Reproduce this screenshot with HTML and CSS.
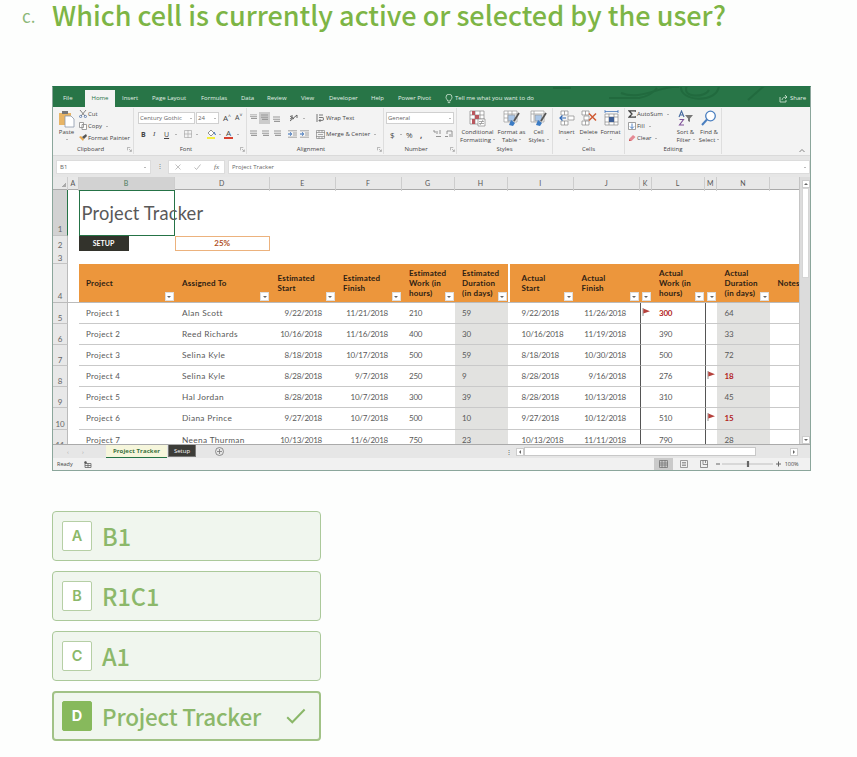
FILE: index.html
```html
<!DOCTYPE html>
<html lang="en">
<head>
<meta charset="utf-8">
<title>Quiz question</title>
<link rel="stylesheet" href="styles.css">
</head>
<body>
<svg class="defs" width="0" height="0">
  <symbol id="launch" viewBox="0 0 6 6"><path d="M.5 4V.5H4M2.5 2.5l2.5 2.5M5.3 3v2.3H3" fill="none" stroke="#888" stroke-width=".7"/></symbol>
  <symbol id="flag" viewBox="0 0 8 8"><path d="M1 0v8" stroke="#777" stroke-width=".8"/><path d="M1.3.5 8 3.3 1.3 5.5z" fill="#b5413c"/></symbol>
  <symbol id="lines" viewBox="0 0 9 8"><path d="M1 1h7M1 3.2h7M2 5.4h6" stroke="#999" stroke-width="1.1"/></symbol>
  <symbol id="indent" viewBox="0 0 9 8"><path d="M0 .8h9M5 3h4M5 5h4M0 7.2h9" stroke="#999" stroke-width=".9"/><path d="M0 4h3M2 2.4 3.8 4 2 5.6" fill="none" stroke="#2f68b5"/></symbol>
</svg>
<main class="page">
  <h1 class="question"><span class="num">c.</span><span class="qtext">Which cell is currently active or selected by the user?</span></h1>

  <section class="excel">
    <nav class="tabs">
      <span>File</span><span class="home">Home</span><span>Insert</span><span>Page Layout</span><span>Formulas</span><span>Data</span><span>Review</span><span>View</span><span>Developer</span><span>Help</span><span>Power Pivot</span>
      <svg width="8" height="10" viewBox="0 0 8 10" fill="none" stroke="#d5ead9" stroke-width=".8"><path d="M2.6 7C2.6 5.6 1 5 1 3.2a3 3 0 0 1 6 0C7 5 5.400 5.600 5.400 7zM2.800 8.600h2.400"/></svg>
      <span>Tell me what you want to do</span>
      <svg class="swirl" width="240" height="20" viewBox="0 0 240 20" fill="none" stroke="#1d6339" stroke-width="2"><path d="M0 2h18M56 12h30q12-2 18-10M68 7c20 8 40-8 58-6M134 0c-6 12 18 12 22 4M128 0c-2 16 36 18 38 0M195 14l16-14"/></svg>
      <svg width="9" height="9" viewBox="0 0 9 9" fill="none" stroke="#d5ead9" stroke-width=".8"><path d="M1 3v5h6V6M3 6c0-2 2-3 5-3M6 1l2 2-2 2"/></svg>
      <span>Share</span>
    </nav>

    <div class="ribbon">
      <div class="group g-clip">
        <div class="body clip">
          <div class="big paste"><svg width="17" height="18" viewBox="0 0 17 18"><path d="M1 3h12v12H1z" fill="#e8b566"/><path d="M4 1h6v3H4z" fill="#777"/><path d="M7 6h6l3 3v8H7z" fill="#fff" stroke="#8a97ab" stroke-width=".8"/></svg><b>Paste</b><i></i></div>
          <div class="stack">
            <div><svg width="8" height="8" viewBox="0 0 8 8" fill="none" stroke="#666" stroke-width=".8"><path d="M1 0l5 6M7 0 2 6"/><circle cx="1.600" cy="6.500" r="1.100" stroke="#4a6ea8"/><circle cx="6.400" cy="6.500" r="1.100" stroke="#4a6ea8"/></svg>Cut</div>
            <div><svg width="8" height="8" viewBox="0 0 8 8" fill="#fff" stroke="#888" stroke-width=".8"><path d="M.5.500h4v5h-4zM3 2.500h4.500v5H3z"/></svg>Copy<i></i></div>
            <div><svg width="8" height="8" viewBox="0 0 8 8"><path d="M0 3l4 4 1-2-3-3z" fill="#e8a94e"/><path d="M3 3l4-3 1 2-3 3z" fill="#555"/></svg>Format Painter</div>
          </div>
        </div>
        <div class="cap">Clipboard<svg width="5" height="5"><use href="#launch"/></svg></div>
      </div>
      <div class="group g-font">
        <div class="body">
          <div class="row r1 fontrow"><span class="sel">Century Gothic<i></i></span><span class="sel">24<i></i></span><span class="A">A<sup>^</sup></span><span class="A a2">A<sup>˅</sup></span></div>
          <div class="row r2 fmt"><b>B</b><em>I</em><u>U</u><i></i><svg width="8" height="8" viewBox="0 0 8 8" fill="none" stroke="#aaa" stroke-width=".7"><path d="M.5.500h7v7h-7zM4 0v8M0 4h8"/></svg><i></i>
            <svg width="9" height="10" viewBox="0 0 9 10"><path d="M1 4l3-3 3 3-3 3z" fill="#fff" stroke="#777" stroke-width=".8"/><path d="M7 3l1.500 3" stroke="#2f68b5"/><path d="M0 8h8v2H0z" fill="#f4ee3c"/></svg><i></i>
            <span class="red">A</span><i></i></div>
        </div>
        <div class="cap">Font<svg width="5" height="5"><use href="#launch"/></svg></div>
      </div>
      <div class="group g-align">
        <div class="body">
          <div class="row r1 al"><svg width="9" height="8"><use href="#lines" y="-1"/></svg><span class="on"><svg width="9" height="8"><use href="#lines"/></svg></span><svg width="9" height="8"><use href="#lines" y="2"/></svg><svg width="9" height="8" viewBox="0 0 9 8" fill="none" stroke="#555" stroke-width=".9"><path d="M1 7l7-6M1 2l4 3M3 1q1 4-2 4M8 1v3"/></svg><i></i><svg width="8" height="8" viewBox="0 0 8 8" fill="none" stroke="#555" stroke-width=".8"><path d="M1 0v8M3 1h4M3 3.500h3q2 0 2 1.500T5 6.500H3M4.500 5 3 6.500 4.500 8"/></svg><span>Wrap Text</span></div>
          <div class="row r2 al"><svg width="9" height="8"><use href="#lines"/></svg><svg class="mid" width="9" height="8"><use href="#lines"/></svg><svg width="9" height="8"><use href="#lines"/></svg><svg width="9" height="8"><use href="#indent"/></svg><svg width="9" height="8"><use href="#indent"/></svg><svg width="9" height="9" viewBox="0 0 9 9" fill="none" stroke="#888" stroke-width=".7"><path d="M.5.500h8v8h-8zM0 2.500h9M0 6.500h9M3 0v2.500M6 0v2.500M3 6.500V9M6 6.500V9M2 4.500h5"/></svg><span>Merge &amp; Center<i></i></span></div>
        </div>
        <div class="cap">Alignment<svg width="5" height="5"><use href="#launch"/></svg></div>
      </div>
      <div class="group g-num">
        <div class="body">
          <div class="row r1"><span class="sel gen">General<i></i></span></div>
          <div class="row r2 nums"><span>$</span><i></i><span>%</span><b>,</b><svg width="8" height="8" viewBox="0 0 8 8" fill="none" stroke="#888" stroke-width=".9"><path d="M0 1h2v2M4 1v3M7 0v4M3 6.500h5"/></svg><svg width="8" height="8" viewBox="0 0 8 8" fill="none" stroke="#888" stroke-width=".9"><path d="M2 4V1h5v6M0 6.500h3M5 4v3"/></svg></div>
        </div>
        <div class="cap">Number<svg width="5" height="5"><use href="#launch"/></svg></div>
      </div>
      <div class="group g-style">
        <div class="body bigs s3">
          <div class="big"><svg width="17" height="17" viewBox="0 0 17 17" fill="#fff" stroke="#888" stroke-width=".7"><path d="M1 1h14v13H1zM1 5h14M1 9h14M6 1v13M11 1v13"/><path d="M3 1h3v4H3zM6 5h4v4H6zM3 9h3v5H3z" fill="#b9575e" stroke="none"/><path d="M9 9h7v7H9zM10 13.500h5M10 11.500h5M14 10l-3 5"/></svg><b>Conditional</b><b>Formatting<i></i></b></div>
          <div class="big"><svg width="17" height="17" viewBox="0 0 17 17" fill="#fff" stroke="#999" stroke-width=".7"><path d="M1 1h13v11H1zM1 4h13M1 8h13M5 1v11M9 1v11"/><path d="M5 5h7v6H5z" fill="#a9c6e8"/><path d="M16 3l-5 8" stroke="#555" stroke-width="1.800"/><path d="M6 15l2-5 4 3-2 3z" fill="#3b7bc4" stroke="none"/></svg><b>Format as</b><b>Table<i></i></b></div>
          <div class="big"><svg width="17" height="17" viewBox="0 0 17 17" fill="#fff" stroke="#999" stroke-width=".7"><path d="M1 1h13v11H1zM1 4h13M4 1v11"/><path d="M5 5h7v6H5z" fill="#a9c6e8"/><path d="M16 3l-5 8" stroke="#555" stroke-width="1.800"/><path d="M6 15l2-5 4 3-2 3z" fill="#3b7bc4" stroke="none"/></svg><b>Cell</b><b>Styles<i></i></b></div>
        </div>
        <div class="cap">Styles</div>
      </div>
      <div class="group g-cells">
        <div class="body bigs c3">
          <div class="big"><svg width="16" height="17" viewBox="0 0 16 17" fill="#fff" stroke="#888" stroke-width=".7"><path d="M2 1h7v4H2zM2 11h7v4H2zM5.500 1v4M5.500 11v4M9 6h6v4H9z"/><path d="M7 8H1M3.500 5.500 1 8l2.500 2.500" stroke="#2f68b5" stroke-width="1.200"/></svg><b>Insert</b><i></i></div>
          <div class="big"><svg width="16" height="17" viewBox="0 0 16 17" fill="#fff" stroke="#888" stroke-width=".7"><path d="M1 1h7v4H1zM1 11h7v4H1zM4.500 1v4M4.500 11v4M3 6h5v4H3z"/><path d="M8 3.500l7 7M15 3.500l-7 7" stroke="#cf5b34" stroke-width="1.500"/></svg><b>Delete</b><i></i></div>
          <div class="big"><svg width="16" height="17" viewBox="0 0 16 17" fill="#fff" stroke="#888" stroke-width=".7"><path d="M2 4h13v11H2zM2 7h13M2 12h13M6 4v11M11 4v11"/><path d="M6 7h5v5H6z" fill="#3f5f95" stroke="none"/><path d="M2 1.500h13M2 0v3M15 0v3" stroke="#2f68b5"/></svg><b>Format</b><i></i></div>
        </div>
        <div class="cap">Cells</div>
      </div>
      <div class="group g-edit">
        <div class="body edit">
          <div class="stack">
            <div><svg width="8" height="8" viewBox="0 0 8 8" fill="none" stroke="#444" stroke-width="1.300"><path d="M7.500 1.800V.800H1L4 4 1 7.200h6.500v-1"/></svg>AutoSum<i></i></div>
            <div><svg width="8" height="8" viewBox="0 0 8 8" fill="#fff" stroke="#888" stroke-width=".8"><path d="M.5.500h7v7h-7z"/><path d="M4 1.500v5M2 4.500l2 2 2-2" stroke="#2f68b5"/></svg>Fill<i></i></div>
            <div><svg width="8" height="8" viewBox="0 0 8 8"><path d="M1 5l4-4 2.500 2-4 4z" fill="#e58a94"/><path d="M1 5l2.500 2H1z" fill="#c55"/></svg>Clear<i></i></div>
          </div>
          <div class="big"><svg width="16" height="17" viewBox="0 0 16 17" fill="none" stroke="#44699f" stroke-width="1.100"><path d="M1 7l2.500-6L6 7M2 5h3"/><path d="M1.500 9.500h4L1.500 15h4.500" stroke="#80529a"/><path d="M7 5h8l-3 3.500V12l-2-1V8.500z" fill="#777" stroke="none"/></svg><b>Sort &amp;</b><b>Filter<i></i></b></div>
          <div class="big"><svg width="16" height="17" viewBox="0 0 16 17" fill="none" stroke="#4a7fc0"><circle cx="9.500" cy="6" r="4.800" stroke-width="1.300" fill="#fff"/><path d="M6 9.500 1 15" stroke-width="2"/></svg><b>Find &amp;</b><b>Select<i></i></b></div>
        </div>
        <div class="cap">Editing</div>
      </div>
      <svg class="collapse" width="6" height="5" viewBox="0 0 6 5"><path d="M.5 4 3 1.500 5.500 4" fill="none" stroke="#777" stroke-width=".9"/></svg>
    </div>

    <div class="fbar">
      <span class="name">B1<i></i></span><span class="dots">⋮</span>
      <span class="fx"><svg width="6" height="6" viewBox="0 0 6 6" stroke="#bbb" stroke-width=".9"><path d="M.5.500l5 5M5.500.500l-5 5"/></svg><svg width="7" height="6" viewBox="0 0 7 6" fill="none" stroke="#bbb"><path d="M.5 3.500l2 2 4-5"/></svg><em>fx</em></span>
      <span class="val">Project Tracker<i></i></span>
    </div>

    <div class="sheet">
      <div class="grid heads">
        <span class="corner"></span><span>A</span><span class="act">B</span><span>D</span><span>E</span><span>F</span><span>G</span><span>H</span><span>I</span><span>J</span><span>K</span><span>L</span><span>M</span><span>N</span><span></span>
      </div>
      <div class="grid row1"><span class="rn act">1</span><span></span><span class="active"><span class="title">Project Tracker</span></span></div>
      <div class="grid row2"><span class="rn">2</span><span></span><span class="setup"><b>SETUP</b></span><span class="pct">25%</span></div>
      <div class="grid row3"><span class="rn">3</span></div>
      <div class="grid row4">
        <span class="rn">4</span><span></span><span class="th p">Project<i></i></span><span class="th p">Assigned To<i></i></span><span class="th">Estimated<br>Start<i></i></span><span class="th">Estimated<br>Finish<i></i></span><span class="th">Estimated<br>Work (in<br>hours)<i></i></span><span class="th">Estimated<br>Duration<br>(in days)<i></i></span><span class="th split">Actual<br>Start<i></i></span><span class="th">Actual<br>Finish<i></i></span><span class="th"><i></i></span><span class="th">Actual<br>Work (in<br>hours)<i></i></span><span class="th"><i></i></span><span class="th">Actual<br>Duration<br>(in days)<i></i></span><span class="th">Notes</span>
      </div>
      <div class="data">
        <div class="grid d"><span class="rn">5</span><span></span><span>Project 1</span><span>Alan Scott</span><span>9/22/2018</span><span>11/21/2018</span><span>210</span><span>59</span><span>9/22/2018</span><span>11/26/2018</span><span><svg width="8" height="8"><use href="#flag"/></svg></span><span class="hot">300</span><span></span><span>64</span><span></span></div>
        <div class="grid d"><span class="rn">6</span><span></span><span>Project 2</span><span>Reed Richards</span><span>10/16/2018</span><span>11/16/2018</span><span>400</span><span>30</span><span>10/16/2018</span><span>11/19/2018</span><span></span><span>390</span><span></span><span>33</span><span></span></div>
        <div class="grid d"><span class="rn">7</span><span></span><span>Project 3</span><span>Selina Kyle</span><span>8/18/2018</span><span>10/17/2018</span><span>500</span><span>59</span><span>8/18/2018</span><span>10/30/2018</span><span></span><span>500</span><span></span><span>72</span><span></span></div>
        <div class="grid d"><span class="rn">8</span><span></span><span>Project 4</span><span>Selina Kyle</span><span>8/28/2018</span><span>9/7/2018</span><span>250</span><span>9</span><span>8/28/2018</span><span>9/16/2018</span><span></span><span>276</span><span><svg width="8" height="8"><use href="#flag"/></svg></span><span class="hot">18</span><span></span></div>
        <div class="grid d"><span class="rn">9</span><span></span><span>Project 5</span><span>Hal Jordan</span><span>8/28/2018</span><span>10/7/2018</span><span>300</span><span>39</span><span>8/28/2018</span><span>10/13/2018</span><span></span><span>310</span><span></span><span>45</span><span></span></div>
        <div class="grid d"><span class="rn">10</span><span></span><span>Project 6</span><span>Diana Prince</span><span>9/27/2018</span><span>10/7/2018</span><span>500</span><span>10</span><span>9/27/2018</span><span>10/12/2018</span><span></span><span>510</span><span><svg width="8" height="8"><use href="#flag"/></svg></span><span class="hot">15</span><span></span></div>
        <div class="grid d"><span class="rn">11</span><span></span><span>Project 7</span><span>Neena Thurman</span><span>10/13/2018</span><span>11/6/2018</span><span>750</span><span>23</span><span>10/13/2018</span><span>11/11/2018</span><span></span><span>790</span><span></span><span>28</span><span></span></div>
      </div>
      <div class="vscroll"><span class="btn up"></span><span class="thumb"></span><span class="btn down"></span></div>
    </div>

    <div class="sheettabs">
      <span class="arr">‹</span><span class="arr">›</span><b class="cur">Project Tracker</b><span class="dark">Setup</span>
      <svg class="plus" width="9" height="9" viewBox="0 0 9 9" fill="none" stroke="#777" stroke-width=".8"><circle cx="4.500" cy="4.500" r="4"/><path d="M4.500 2v5M2 4.500h5"/></svg>
      <span class="dots">⋮</span><span class="btn left"></span><span class="hthumb"></span><span class="btn right"></span>
    </div>
    <div class="status">
      <span>Ready</span><svg class="rec" width="8" height="7" viewBox="0 0 8 7" fill="none" stroke="#666" stroke-width=".8"><path d="M1 2.500h6v4H1zM1 4.500h6M4 2.500v4"/><circle cx="1.500" cy="1.500" r="1" fill="#555"/></svg>
      <span class="view"><svg width="9" height="8" viewBox="0 0 9 8" fill="none" stroke="#777" stroke-width=".8"><path d="M.5.500h8v7h-8zM0 3h9M0 5h9M3 0v8M6 0v8"/></svg></span>
      <svg class="v2" width="8" height="8" viewBox="0 0 8 8" fill="none" stroke="#888" stroke-width=".8"><path d="M.5.500h7v7h-7zM2 2.500h4M2 4h4M2 5.500h4"/></svg>
      <svg class="v3" width="8" height="8" viewBox="0 0 8 8" fill="none" stroke="#777" stroke-width=".8"><path d="M.5.500h7v7h-7zM3 0v4.500h5M5.500 0v3"/></svg>
      <svg class="zoom" width="66" height="8" viewBox="0 0 66 8" stroke="#666"><path d="M0 4h4M60 4h5M62.500 1.500v5"/><path d="M6 4h51" stroke="#aaa" stroke-width=".7"/><path d="M32 1v6" stroke-width="2.200"/></svg>
      <span>100%</span>
    </div>
  </section>

  <div class="options">
    <div class="opt"><span class="key">A</span><span>B1</span></div>
    <div class="opt"><span class="key">B</span><span>R1C1</span></div>
    <div class="opt"><span class="key">C</span><span>A1</span></div>
    <div class="opt picked"><span class="key">D</span><span class="words">Project Tracker</span><svg width="20" height="16" viewBox="0 0 20 16"><path d="M1.200 9.200 6.300 14.300 18.600 1.500" fill="none" stroke="#8ab768" stroke-width="2"/></svg></div>
  </div>
</main>
</body>
</html>
```
FILE: styles.css
```css
* { box-sizing: border-box; }
body { margin: 0; background: #fdfefd; width: 857px; height: 757px; overflow: hidden; font-family: "Open Sans", sans-serif; }
svg { display: block; flex: none; }
.defs { position: absolute; }
.page { padding-left: 52px; }
.question { margin: 0; height: 86px; font: 500 27px/29px "Noto Sans CJK SC", sans-serif; color: #7db545; white-space: nowrap; display: flex; }
.num { margin-left: -30px; width: 30px; font-size: 17px; line-height: 31px; color: #8cb878; font-weight: 400; }

.excel { width: 759px; height: 385px; border: 1px solid #8ba69b; border-top-color: #24734a; background: #e6e6e6; font-size: 6px; color: #444; white-space: nowrap; overflow: hidden; }
.tabs { display: grid; height: 20px; background: #287547; color: #e3f1e7; position: relative; padding: 3px 0 0 10px; line-height: 17px;
  grid-template-columns: 22px 30px 7px 30px 49px 40px 26px 34px 28px 42px 27px 47px 10px 324px 11px 20px; }
.tabs > :nth-child(3) { grid-column: 4; }
.tabs > svg { margin-top: 4px; }
.tabs .swirl { position: absolute; left: 500px; top: -1px; margin: 0; opacity: .6; }
.tabs .home { background: #f3f3f3; color: #257346; text-align: center; }

.ribbon { display: flex; height: 49px; background: #f3f3f3; border-bottom: 1px solid #dadada; position: relative; }
.group { display: flex; flex-direction: column; border-right: 1px solid #dedede; height: 46px; margin-top: 1px; }
.g-clip { width: 81px; } .g-font { width: 113px; } .g-align { width: 137px; } .g-num { width: 73px; }
.g-style { width: 96px; } .g-cells { width: 72px; } .g-edit { width: 97px; }
.body { height: 38px; }
.cap { text-align: center; line-height: 10px; position: relative; }
.g-clip .cap { padding-right: 5px; } .g-font .cap, .g-align .cap, .g-num .cap { padding-right: 8px; }
.cap svg { position: absolute; right: 1px; top: 3px; }
.ribbon i, .fbar i { display: inline-block; width: 0; height: 0; border: 1.3px solid transparent; border-top: 1.8px solid #777; border-bottom: 0; margin-left: 2px; vertical-align: 1.5px; flex: none; }
.collapse { position: absolute; right: 5px; bottom: 2px; }
.big { display: flex; flex-direction: column; align-items: center; line-height: 8px; }
.big b { font-weight: 400; }
.big svg { margin-bottom: .5px; }
.big > i { margin: 3px 0 0; }
.clip { display: grid; grid-template-columns: 27px 1fr; padding-top: 2px; }
.clip .paste svg { margin-bottom: 0; }
.stack { display: flex; flex-direction: column; gap: 0; line-height: 12px; }
.stack div { display: flex; gap: 1px; align-items: center; height: 12px; }
.clip .stack { margin: -2px 0 0 -1px; }
.stack i { margin-left: 3px; }
.row { display: flex; align-items: center; }
.r1 { height: 12px; margin-top: 4px; } .r2 { height: 12px; margin-top: 4px; }
.sel { display: flex; justify-content: space-between; align-items: center; background: #fff; border: 1px solid #d0d0d0; height: 12px; padding: 0 2px 0 1px; color: #666; }
.fontrow { padding-left: 4px; }
.fontrow .sel:first-child { width: 57px; } .fontrow .sel:nth-child(2) { width: 23px; margin-left: 1px; }
.A { margin-left: 4px; font-size: 8px; line-height: 10px; width: 8px; }
.a2 { font-size: 7px; }
.A sup { font-size: 5px; vertical-align: 3px; line-height: 0; }
.fmt { padding-left: 7px; font-size: 7px; display: grid; grid-template-columns: 12px 11px 9px 11px 10px 13px 10px 7px 11px 6px; }
.fmt em { font-family: "Liberation Serif", serif; }
.fmt .red { font-size: 8px; line-height: 8px; width: 9px; text-align: center; border-bottom: 2px solid #d8402f; }
.al { padding-left: 2px; display: grid; grid-template-columns: 11px 12px 17px 12px 15px 10px 1fr; }
.al .on { background: #cbcbcb; height: 12px; width: 11px; padding: 2px 1px; margin-left: -1px; }
.r2.al { grid-template-columns: 12px 12px 15px 12px 16px 10px 1fr; }
.al span i { margin-left: 4px; }
.gen { width: 68px; margin-left: 2px; }
.nums { padding-left: 6px; font-size: 8px; display: grid; grid-template-columns: 8px 8px 14px 13px 12px 10px; }
.nums b { color: #555; }
.bigs { display: grid; justify-content: center; padding-top: 2px; }
.s3 { grid-template-columns: 39px 29px 25px; }
.c3 { grid-template-columns: 22px 22px 22px; }
.edit { display: grid; grid-template-columns: 46px 23px 24px; padding-top: 2px; padding-left: 3px; }
.edit .stack { margin-top: -2px; }

.fbar { display: flex; height: 21px; padding: 4px 0 3px 3px; line-height: 12px; color: #666; }
.fbar > span { background: #fff; border: 1px solid #dcdcdc; height: 14px; }
.fbar .name { width: 95px; display: flex; justify-content: space-between; align-items: center; padding: 0 4px 0 3px; }
.fbar .dots { background: none; border: 0; width: 17px; text-align: center; }
.fbar .fx { width: 57px; display: flex; justify-content: space-between; align-items: center; padding: 0 5px 0 6px; font-family: "Liberation Serif", serif; font-size: 7px; }
.fbar .val { margin-left: 3px; flex: 1; display: flex; justify-content: space-between; align-items: center; padding: 0 3px; }

.sheet { height: 267px; position: relative; background: #fff; width: 745.500px; font-family: Lato, sans-serif; }
.grid { display: grid; grid-template-columns: 15px 10.500px 96px 95.500px 65.500px 66px 53px 53px 66.500px 65.500px 12px 53px 12.500px 53px 29.500px; width: 746px; }
.heads { height: 13px; background: #e8e8e8; border-bottom: 1px solid #aaa; font-size: 7px; text-align: center; line-height: 13px; color: #555; }
.heads span { border-right: 1px solid #cdcdcd; }
.heads .act { background: #d2d2d2; border-bottom: 1px solid #257346; color: #4c7a5c; }
.heads .corner { background: linear-gradient(135deg, transparent 65%, #aaa 65%) 6px 3px / 7px 7px no-repeat; }
.rn { background: #e8e8e8; border-right: 1px solid #bbb; border-bottom: 1px solid #c4c4c4; display: flex; align-items: flex-end; justify-content: center; font-size: 8px; line-height: 9px; color: #666; }
.rn.act { background: #d2d2d2; border-right: 1px solid #257346; padding-bottom: 1px; }
.row1 { height: 46px; }
.row1 .active { border: 1.500px solid #257346; border-top-width: 1px; padding: 11px 0 0 2px; overflow: visible; }
.title { font-size: 18.300px; line-height: 22px; color: #595959; letter-spacing: .18px; }
.row2 { height: 14px; }
.setup b { display: block; width: 50px; background: #33332c; color: #fff; text-align: center; line-height: 15px; height: 15px; font-size: 7px; }
.pct { border: 1px solid #ecb27d; color: #b04f24; font-weight: 700; font-size: 8px; line-height: 12px; text-align: center; }
.row3 { height: 14px; }
.row4 { height: 39px; border-bottom: 1px solid #bbb; }
.row4 .rn { border-bottom: 0; padding-bottom: 1px; }
.th { background: #ec963c; color: #2e2113; font-size: 8px; letter-spacing: .2px; font-weight: 700; line-height: 10px; display: flex; align-items: center; padding-left: 7.500px; position: relative; overflow: hidden; }
.th.split { border-left: 2px solid #fff; padding-left: 12px; }
.th i { position: absolute; right: 1px; bottom: 1px; width: 9px; height: 9px; background: #fff; border: 1px solid #ddd; }
.th i::after, .btn::after { content: ""; position: absolute; left: 50%; top: 50%; border: 2px solid transparent; border-top-color: #666; border-bottom: 0; transform: translate(-50%, -50%); }
.data { height: 141px; overflow: hidden; }
.d { height: 21.100px; font-size: 8px; color: #595959; line-height: 20px; letter-spacing: -.25px; }
.d > span:nth-child(n+3) { border-bottom: 1px solid #c9c9c9; padding-left: 7.500px; }
.d > span:nth-child(3) { letter-spacing: .3px; }
.d > span:nth-child(4) { font-size: 8.300px; letter-spacing: .35px; }
.d > span:nth-child(5), .d > span:nth-child(6), .d > span:nth-child(10) { text-align: right; padding-right: 13.500px; }
.d > span:nth-child(9) { padding-left: 14px; }
.d > span:nth-child(11), .d > span:nth-child(13) { border-left: 1px solid #555; padding: 5px 0 0 1px; }
.d > span:nth-child(8), .d > span:nth-child(14) { background: #e2e2e0; }
.d > .hot { color: #b31f24; font-weight: 700; }
.d .rn { line-height: 10px; }
.vscroll { position: absolute; left: 745.500px; top: 0; width: 12px; height: 267px; background: #dcdcdc; padding-left: 2px; display: flex; flex-direction: column; border-left: 1px solid #c5c5c5; }
.btn { position: relative; width: 8px; height: 8px; background: #fff; border: 1px solid #ccc; }
.up { margin-top: 3px; } .up::after { transform: translate(-50%, -50%) rotate(180deg); }
.left::after { transform: translate(-50%, -50%) rotate(90deg); }
.right::after { transform: translate(-50%, -50%) rotate(-90deg); }
.vscroll .thumb { background: #fff; height: 90px; width: 7px; border: 1px solid #d5d5d5; margin-bottom: auto; }

.sheettabs { display: flex; align-items: center; height: 14px; background: #e6e6e6; border-top: 1px solid #aaa; width: 757px; }
.arr { width: 15px; padding-left: 14px; color: #aaa; }
.cur { margin-left: 23px; width: 61px; height: 13px; line-height: 12px; text-align: center; background: #f6f6dc; color: #39703c; border-bottom: 1px solid #257346; letter-spacing: .1px; align-self: flex-start; }
.dark { background: #3c3c38; color: #fff; height: 12px; line-height: 12px; width: 28px; text-align: center; margin-left: 1px; align-self: flex-start; border: 1px solid #777; border-top: 0; }
.plus { margin-left: 19px; }
.sheettabs .dots { margin-left: 282px; width: 10px; }
.hthumb { width: 232px; height: 9px; background: #fff; border: 1px solid #c8c8c8; margin-right: 34px; }

.status { display: flex; align-items: center; height: 12px; background: #f1f1f1; padding-left: 4px; font-size: 5.500px; }
.rec { margin-left: 11px; }
.view { background: #cacaca; width: 19px; height: 12px; padding: 2px 5px; margin-left: 562px; }
.v2 { margin-left: 7px; } .v3 { margin-left: 12px; } .zoom { margin: 0 3px 0 8px; }

.options { margin-top: 40px; display: flex; flex-direction: column; gap: 10px; }
.opt { width: 269px; height: 50px; border: 1px solid #abc99a; border-radius: 4px; background: #f0f6ee; display: flex; align-items: center; padding-left: 9px; font: 500 23.500px/46px "Noto Sans CJK SC", sans-serif; color: #8cb86a; white-space: nowrap; }
.key { width: 30px; height: 30px; border: 1px solid #b6cfa5; border-radius: 2px; background: #fff; font: 600 14.500px/28px Inter, sans-serif; text-align: center; margin-right: 10px; }
.picked { border: 2.500px solid #a1c286; padding-left: 8px; }
.picked .key { background: #87b95c; border-color: #87b95c; color: #fff; font-weight: 700; }
.words { font-size: 22.500px; width: 159px; letter-spacing: -.2px; }
.picked svg { margin-left: 25px; }
```
